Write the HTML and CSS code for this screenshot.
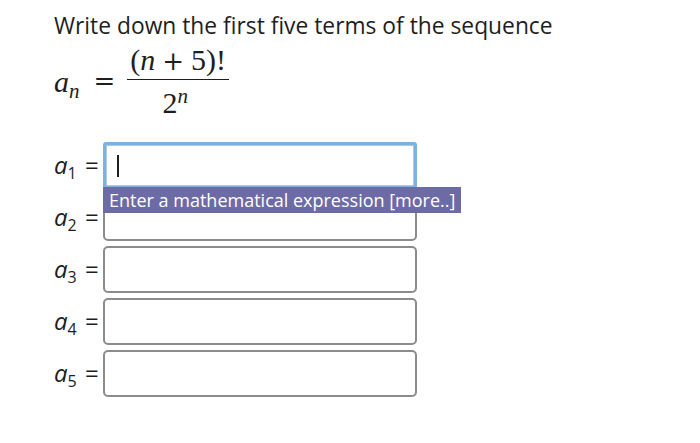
FILE: index.html
```html
<html lang="en">
<head>
  <meta charset="UTF-8">
  <title>Sequence terms</title>
  <link rel="stylesheet" href="styles.css">
</head>
<body>
  <div class="question">
    <p class="prompt">Write down the first five terms of the sequence</p>

    <!-- Formula -->
    <div class="formula">
      <span class="lhs"><i>a</i><sub><i>n</i></sub></span>
      <span class="op eq">=</span>
      <span class="frac">
        <span class="num">(<i>n</i><span class="op plus">+</span>5)!</span>
        <span class="den">2<sup><i>n</i></sup></span>
      </span>
    </div>

    <!-- Answer Fields -->
    <div class="answers">
      <div class="row">
        <label class="term"><i>a</i><sub>1</sub> =</label>
        <div class="field focused">
          <span class="caret"></span>
          <div class="tip">Enter a mathematical expression [more..]</div>
        </div>
      </div>
      <div class="row">
        <label class="term"><i>a</i><sub>2</sub> =</label>
        <div class="field"></div>
      </div>
      <div class="row">
        <label class="term"><i>a</i><sub>3</sub> =</label>
        <div class="field"></div>
      </div>
      <div class="row">
        <label class="term"><i>a</i><sub>4</sub> =</label>
        <div class="field"></div>
      </div>
      <div class="row">
        <label class="term"><i>a</i><sub>5</sub> =</label>
        <div class="field"></div>
      </div>
    </div>
  </div>
</body>
</html>
```

FILE: styles.css
```css
/* Global */
body {
  margin: 0;
  background: #ffffff;
  color: #1e1e1e;
  font-family: 'Open Sans', 'Noto Sans', sans-serif;
}

.question {
  padding: 10px 0 0 54px;
}

.prompt {
  margin: 0;
  font-size: 22.8px;
  line-height: 32px;
}

/* Formula */
.formula {
  display: flex;
  align-items: center;
  font-family: 'Liberation Serif', 'DejaVu Serif', serif;
  font-size: 30px;
  margin-top: 2px;
}
.lhs {
  margin-top: 6px;
}
.lhs sub {
  font-size: 21px;
  vertical-align: -6px;
}
.op {
  font-family: 'DejaVu Serif', serif;
  font-weight: 300;
}
.eq {
  font-size: 26px;
  margin: 0 12px 0 14px;
}
.plus {
  font-size: 26px;
  margin: 0 7px;
}
.frac {
  display: inline-flex;
  flex-direction: column;
  align-items: center;
}
.num {
  padding: 0 3px 2px;
  border-bottom: 1.5px solid #1e1e1e;
  line-height: 31px;
}
.den {
  line-height: 30px;
  padding-top: 1px;
  margin-right: 6px;
}
.den sup {
  font-size: 21px;
  vertical-align: 10px;
}

/* Answer rows */
.answers {
  margin-top: 24px;
  display: flex;
  flex-direction: column;
  gap: 5px;
}
.row {
  display: flex;
  align-items: center;
}
.term {
  width: 49px;
  font-size: 24px;
  color: #1e1e1e;
}
.term sub {
  font-size: 16px;
  vertical-align: -5px;
  margin-right: 2px;
}

.field {
  position: relative;
  width: 310px;
  height: 43px;
  border: 2px solid #8c8c8c;
  border-radius: 5px;
  background: #fff;
}
.field.focused {
  border: 3px solid #7cb2de;
  border-radius: 3px;
  width: 308px;
  height: 41px;
  box-shadow: inset 0 0 0 1px #a9cbe9;
}

.caret {
  position: absolute;
  left: 11px;
  top: 10px;
  width: 2px;
  height: 22px;
  background: #1e1e1e;
}

/* Tooltip */
.tip {
  position: absolute;
  top: 100%;
  left: -3px;
  margin-top: 1px;
  padding: 0 6px;
  height: 26px;
  line-height: 26px;
  white-space: nowrap;
  background: #6d6ba6;
  color: #fff;
  font-size: 18px;
  z-index: 2;
}
```
